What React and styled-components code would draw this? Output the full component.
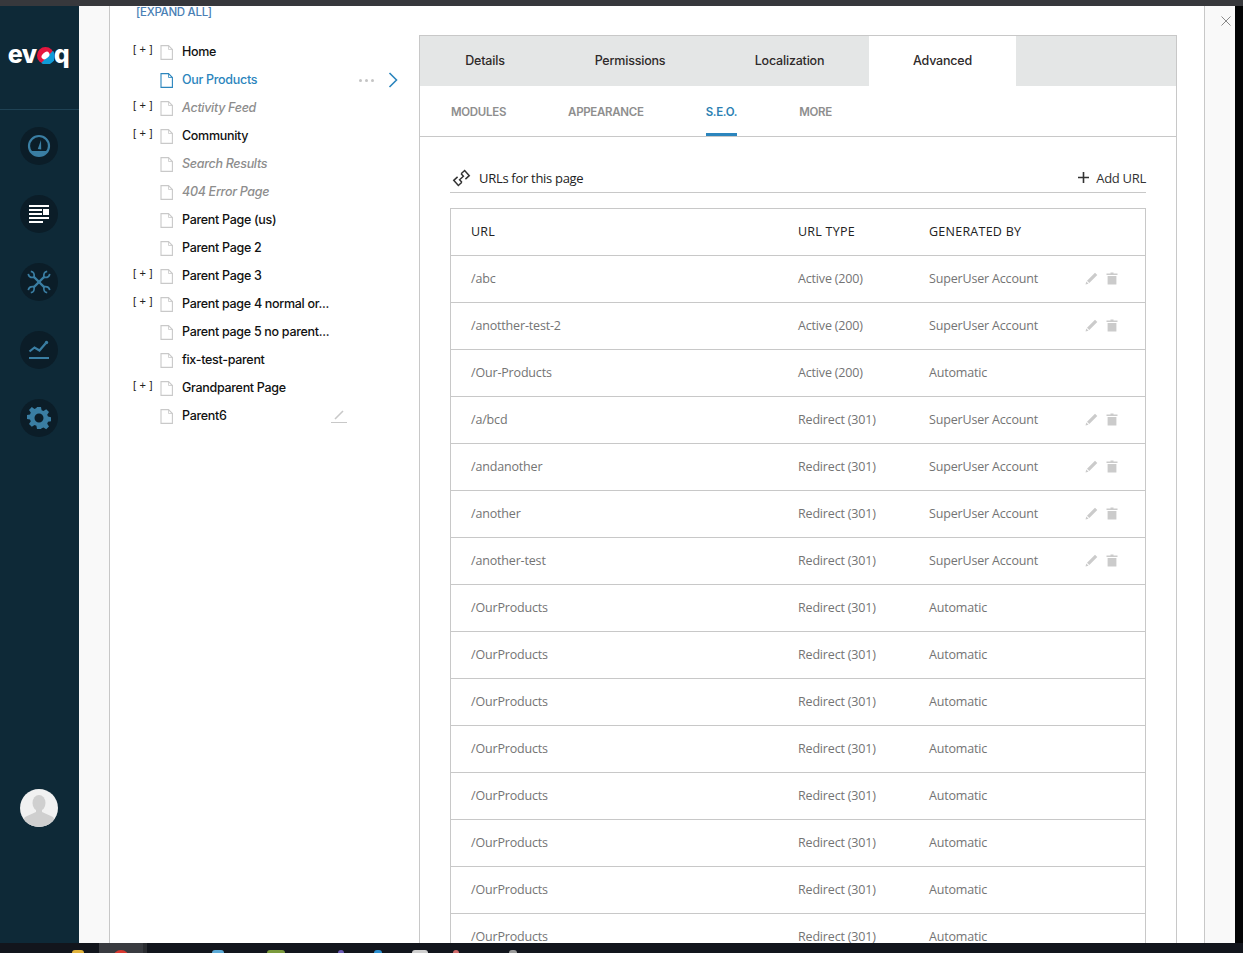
import React from 'react';
import styled, { createGlobalStyle } from 'styled-components';

const GlobalStyle = createGlobalStyle`
    html, body {
        margin : 0;
        padding : 0;
        height : 100%;
        overflow : hidden;
        background : #000;
    }
    body {
        font-family : "Open Sans", "Liberation Sans", sans-serif;
    }
`;

const Page = styled.div`
    width : 1243px;
    height : 953px;
    display : flex;
    flex-direction : column;
    overflow : hidden;
`;
const TopBar = styled.div`
    height : 6px;
    flex : none;
    background : #37383c;
`;
const Middle = styled.div`
    height : 937px;
    flex : none;
    display : flex;
    background : #030405;
`;
const Sidebar = styled.nav`
    width : 79px;
    flex : none;
    box-sizing : border-box;
    padding-right : 1px;
    background : #0e2937;
    display : flex;
    flex-direction : column;
    align-items : center;
`;
const LogoBox = styled.div`
    width : 79px;
    height : 104px;
    flex : none;
    box-sizing : border-box;
    border-bottom : 1px solid #1f4254;
    display : flex;
    align-items : center;
    justify-content : center;
    padding : 0 1px 7px 0;
    color : #fff;
    font : 800 25px/24px "Inter", "Liberation Sans", sans-serif;
    letter-spacing : -0.4px;
`;
const LogoMark = styled.svg`
    width : 17px;
    height : 17px;
    margin : 2px 0 0 0;
`;
const NavList = styled.div`
    display : flex;
    flex-direction : column;
    gap : 30px;
    margin-top : 17px;
`;
const NavButton = styled.button`
    width : 38px;
    height : 38px;
    padding : 0;
    border : 0;
    border-radius : 50%;
    background : #0b1d28;
    color : ${({ $active }) => ($active ? '#fff' : '#3a7ea3')};
    display : flex;
    align-items : center;
    justify-content : center;
`;
const Avatar = styled.div`
    width : 38px;
    height : 38px;
    border-radius : 50%;
    background : #f1f1f1;
    overflow : hidden;
    margin-top : auto;
    margin-bottom : 116px;
`;

const Modal = styled.div`
    flex : 1;
    display : flex;
    background : #f9f9f9;
    padding-left : 30px;
`;
const ModalBody = styled.div`
    width : 1096px;
    flex : none;
    box-sizing : border-box;
    background : #fff;
    border-left : 1px solid #c8c8c8;
    border-right : 1px solid #c8c8c8;
    display : flex;
    overflow : hidden;
`;
const CloseGutter = styled.div`
    flex : 1;
    display : flex;
    justify-content : flex-end;
    padding : 9px 3px 0 0;
    color : #8a8a8a;
`;
const BlackEdge = styled.div`
    width : 8px;
    flex : none;
    background : #030405;
`;

const TreeColumn = styled.div`
    width : 309px;
    flex : none;
    box-sizing : border-box;
`;
const ExpandAll = styled.a`
    display : block;
    box-sizing : border-box;
    height : 31px;
    margin : 0 0 0 26px;
    color : #4a7fb5;
    font : 500 11.5px/13px "Inter", sans-serif;
    letter-spacing : -0.3px;
`;
const TreeList = styled.ul`
    list-style : none;
    margin : 1px 0 0 0;
    padding : 0;
`;
const TreeRow = styled.li`
    height : 28px;
    display : flex;
    align-items : center;
    font : 500 12.5px/16px "Inter", sans-serif;
    letter-spacing : -0.3px;
    color : ${({ $state }) => ($state === 'active' ? '#2b85bd' : $state === 'hidden' ? '#8d8d8d' : '#111')};
    font-style : ${({ $state }) => ($state === 'hidden' ? 'italic' : 'normal')};
`;
const Toggle = styled.span`
    width : 50px;
    flex : none;
    box-sizing : border-box;
    padding : 0 0 6px 23px;
    font : 400 11px/14px "Liberation Sans", sans-serif;
    letter-spacing : 0.2px;
    color : #222;
    white-space : pre;
`;
const PageIcon = styled.svg`
    width : 13px;
    height : 15px;
    flex : none;
    margin-right : 9px;
    color : ${({ $active }) => ($active ? '#2b85bd' : '#c9c9c9')};
`;
const RowLabel = styled.span`
    white-space : nowrap;
`;
const RowTools = styled.span`
    display : flex;
    align-items : center;
    margin-left : ${({ $offset }) => $offset}px;
`;
const Dots = styled.span`
    display : flex;
    gap : 3px;
    margin-right : 14px;
`;
const Dot = styled.i`
    width : 3px;
    height : 3px;
    border-radius : 50%;
    background : #c4c4c4;
`;

const DetailPanel = styled.section`
    width : 758px;
    flex : none;
    box-sizing : border-box;
    margin-top : 29px;
    border : 1px solid #c8c8c8;
    border-bottom : 0;
    overflow : hidden;
`;
const TabBar = styled.div`
    height : 50px;
    display : flex;
    background : #e4e6e6;
`;
const Tab = styled.div`
    box-sizing : border-box;
    width : ${({ $width }) => $width}px;
    display : flex;
    align-items : center;
    justify-content : center;
    padding-bottom : 1px;
    background : ${({ $active }) => ($active ? '#fff' : 'transparent')};
    color : #2e2a2a;
    font : 500 12.5px/16px "Inter", sans-serif;
    letter-spacing : -0.2px;
`;
const SubTabs = styled.div`
    height : 51px;
    box-sizing : border-box;
    border-bottom : 1px solid #c8c8c8;
    display : flex;
    gap : 62px;
    padding-left : 31px;
`;
const SubTab = styled.div`
    height : 50px;
    box-sizing : border-box;
    display : flex;
    align-items : center;
    font : 600 11.5px/14px "Inter", sans-serif;
    letter-spacing : -0.3px;
    color : ${({ $active }) => ($active ? '#2b7fb3' : '#8e8e8e')};
    border-bottom : 3px solid ${({ $active }) => ($active ? '#2b85bd' : 'transparent')};
    padding-top : 5px;
`;
const Content = styled.div`
    padding : 27px 30px 0 30px;
`;
const SectionHead = styled.div`
    height : 29px;
    box-sizing : border-box;
    border-bottom : 1px solid #c8c8c8;
    display : flex;
    align-items : center;
    padding-bottom : 1px;
    font-size : 13px;
    letter-spacing : -0.3px;
    color : #222;
`;
const SectionTitle = styled.span`
    margin-left : 8px;
`;
const AddUrl = styled.button`
    margin-left : auto;
    padding : 0;
    border : 0;
    background : none;
    display : flex;
    align-items : center;
    gap : 7px;
    font : inherit;
    letter-spacing : inherit;
    color : #333;
`;
const UrlTable = styled.div`
    margin-top : 15px;
    border : 1px solid #c8c8c8;
    border-bottom : 0;
`;
const UrlRow = styled.div`
    height : 47px;
    box-sizing : border-box;
    border-bottom : 1px solid #c8c8c8;
    display : grid;
    grid-template-columns : 327px 131px 156px 1fr;
    align-items : center;
    padding : 0 0 2px 20px;
    font-size : 12.5px;
    letter-spacing : ${({ $head }) => ($head ? '0.25px' : '-0.17px')};
    color : ${({ $head }) => ($head ? '#222' : '#747474')};
`;
const RowActions = styled.div`
    display : flex;
    gap : 8px;
    color : #cbcbcb;
`;

const TaskBar = styled.div`
    height : 10px;
    flex : none;
    background : #12151c;
    display : flex;
    align-items : flex-end;
`;
const TaskItem = styled.div`
    width : 44px;
    height : 10px;
    margin-left : 15px;
    background : #393b40;
    border-right : 4px solid #2a2c30;
    display : flex;
    justify-content : center;
    overflow : hidden;
`;
const TaskDot = styled.i`
    width : 16px;
    height : 16px;
    border-radius : 50%;
    background : #d8372f;
    margin-top : 7px;
`;
const TaskIcon = styled.i`
    width : ${({ $width }) => $width}px;
    height : 3px;
    margin-left : ${({ $gap }) => $gap}px;
    border-radius : 3px 3px 0 0;
    background : ${({ $color }) => $color};
`;

const LinkGlyph = styled.svg`
    width : 19px;
    height : 18px;
    margin-left : 2px;
`;

const File = ({ active }) => (
    <PageIcon $active={active} viewBox="0 0 13 15" fill="none" stroke="currentColor" strokeWidth="1.1">
        <path d="M1 .6h7.5L12.400 4.500V14.400H1z" />
        <path d="M8.500.6V4.500h3.900" strokeWidth="0.8" />
    </PageIcon>
);

const Pencil = () => (
    <svg width="13" height="13" viewBox="0 0 13 13" fill="currentColor">
        <path d="M10 .7l2.300 2.300-8 8-2.300-2.300zM1.300 9.500l2.200 2.200-3 .8z" />
    </svg>
);

const Trash = () => (
    <svg width="12" height="13" viewBox="0 0 12 13" fill="currentColor">
        <path d="M4.500.5h3V1.600H11.500V3H.5V1.600h4zM1.600 4h8.800v8.500H1.600z" />
    </svg>
);

const Gauge = () => (
    <svg width="24" height="24" viewBox="0 0 24 24">
        <circle cx="12" cy="12" r="10" fill="none" stroke="currentColor" strokeWidth="2.200" />
        <path d="M3.500 17h17a10 10 0 0 1-17 0z" fill="currentColor" />
        <path d="M10.800 15l3.200-9 .2 9.400z" fill="currentColor" />
    </svg>
);

const Article = () => (
    <svg width="22" height="21" viewBox="0 0 22 21" fill="currentColor">
        <path d="M1 1h20v2H1zM1 5h13v2H1zM15 5h6v6h-6zM1 9h13v2H1zM1 13h20v2H1zM1 17h14v2H1z" />
    </svg>
);

const Wrench = () => (
    <>
        <path d="M6.500 6.500l11 11" strokeWidth="2.400" />
        <path d="M1.300 3.800Q1.800 8 7 7.400Q8 2 3.800 1.300" />
        <path d="M22.700 20.200Q22.200 16 17 16.600Q16 22 20.200 22.700" />
    </>
);

const Tools = () => (
    <svg width="24" height="24" viewBox="0 0 24 24" fill="none" stroke="currentColor" strokeWidth="1.700">
        <Wrench />
        <g transform="translate(24 0) scale(-1 1)"><Wrench /></g>
    </svg>
);

const Chart = () => (
    <svg width="22" height="20" viewBox="0 0 22 20" fill="currentColor">
        <path d="M1 17h20v2H1z" />
        <path d="M1.500 11.500l5-4 5 3 6-7" fill="none" stroke="currentColor" strokeWidth="2.200" />
        <circle cx="18.500" cy="2.500" r="1.700" />
    </svg>
);

const Gear = () => (
    <svg width="24" height="24" viewBox="0 0 24 24" fill="currentColor">
        <path fillRule="evenodd" d="M10 1h4l.6 3.200 1.900.8 2.700-1.800 2.800 2.800-1.800 2.700.8 1.900 3 .6v4l-3 .6-.8 1.900 1.800 2.700-2.800 2.800-2.700-1.800-1.900.8L14 23h-4l-.6-3.200-1.900-.8-2.700 1.800L2 18l1.800-2.700-.8-1.900-3-.4v-4l3-.6.8-1.900L2 3.900l2.800-2.800 2.700 1.800 1.900-.8zM12 7.500a4.500 4.500 0 1 0 0 9 4.500 4.500 0 0 0 0-9z" />
    </svg>
);

const LinkIcon = () => (
    <LinkGlyph viewBox="0 0 22 20" fill="none" stroke="#333" strokeWidth="1.700">
        <g transform="rotate(-42 11 10)">
            <path d="M8.500 6H2.500v8h5.500M13.500 14h6V6h-5.500" />
            <path d="M8 14v-4h6V6" />
        </g>
    </LinkGlyph>
);

const Person = () => (
    <svg width="38" height="38" viewBox="0 0 38 38" fill="#cfcfcf">
        <ellipse cx="19" cy="14" rx="6.500" ry="8" />
        <path d="M16 20h6v3l10 4.500c1 .4 2 1.500 2 2.500l-1 8H5l-1-8c0-1 1-2.100 2-2.500L16 23z" />
    </svg>
);

const treeRows = [
    { name: 'Home', toggle: true },
    { name: 'Our Products', state: 'active', tools: true },
    { name: 'Activity Feed', toggle: true, state: 'hidden' },
    { name: 'Community', toggle: true },
    { name: 'Search Results', state: 'hidden' },
    { name: '404 Error Page', state: 'hidden' },
    { name: 'Parent Page (us)' },
    { name: 'Parent Page 2' },
    { name: 'Parent Page 3', toggle: true },
    { name: 'Parent page 4 normal or...', toggle: true },
    { name: 'Parent page 5 no parent...' },
    { name: 'fix-test-parent' },
    { name: 'Grandparent Page', toggle: true },
    { name: 'Parent6', edit: true },
];

const tabs = [
    { name: 'Details', width: 130 },
    { name: 'Permissions', width: 160 },
    { name: 'Localization', width: 159 },
    { name: 'Advanced', width: 147, active: true },
];

const subTabs = ['MODULES', 'APPEARANCE', 'S.E.O.', 'MORE'];

const taskIcons = [
    { gap: 65, width: 12, color: '#5aa9d6' },
    { gap: 43, width: 18, color: '#7a9a3c' },
    { gap: 53, width: 6, color: '#6b5bb5' },
    { gap: 30, width: 8, color: '#2b8fd0' },
    { gap: 30, width: 16, color: '#cfcfcf' },
    { gap: 25, width: 6, color: '#d06a6a' },
    { gap: 50, width: 8, color: '#9a9a9a' },
];

const SU = 'SuperUser Account';
const urls = [
    ['/abc', 'Active (200)', SU],
    ['/anotther-test-2', 'Active (200)', SU],
    ['/Our-Products', 'Active (200)', 'Automatic'],
    ['/a/bcd', 'Redirect (301)', SU],
    ['/andanother', 'Redirect (301)', SU],
    ['/another', 'Redirect (301)', SU],
    ['/another-test', 'Redirect (301)', SU],
    ...Array.from({ length: 8 }, () => ['/OurProducts', 'Redirect (301)', 'Automatic']),
];

const App = () => (
    <Page>
        <GlobalStyle />
        <TopBar />
        <Middle>
            <Sidebar>
                <LogoBox>
                    ev
                    <LogoMark viewBox="0 0 16 16">
                        <circle cx="8" cy="8" r="8" fill="#e5173f" />
                        <path d="M15 3.500A8 8 0 0 1 4 15z" fill="#0f9bd7" />
                        <ellipse cx="8" cy="8" rx="4.200" ry="2.800" fill="#fff" transform="rotate(-40 8 8)" />
                    </LogoMark>
                    q
                </LogoBox>
                <NavList>
                    <NavButton><Gauge /></NavButton>
                    <NavButton $active><Article /></NavButton>
                    <NavButton><Tools /></NavButton>
                    <NavButton><Chart /></NavButton>
                    <NavButton><Gear /></NavButton>
                </NavList>
                <Avatar><Person /></Avatar>
            </Sidebar>
            <Modal>
                <ModalBody>
                    <TreeColumn>
                        <ExpandAll>[EXPAND ALL]</ExpandAll>
                        <TreeList>
                            {treeRows.map((row) => (
                                <TreeRow key={row.name} $state={row.state}>
                                    <Toggle>{row.toggle ? '[ + ]' : ''}</Toggle>
                                    <File active={row.state === 'active'} />
                                    <RowLabel>{row.name}</RowLabel>
                                    {row.tools && (
                                        <RowTools $offset={102}>
                                            <Dots><Dot /><Dot /><Dot /></Dots>
                                            <svg width="10" height="16" viewBox="0 0 10 16" fill="none" stroke="#2b85bd" strokeWidth="1.600">
                                                <path d="M1.500 1l7 7-7 7" />
                                            </svg>
                                        </RowTools>
                                    )}
                                    {row.edit && (
                                        <RowTools $offset={104}>
                                            <svg width="16" height="14" viewBox="0 0 16 14" fill="none" stroke="#c8c8c8">
                                                <path d="M4 10l8-8" strokeWidth="1.600" />
                                                <path d="M0 13.500h16" />
                                            </svg>
                                        </RowTools>
                                    )}
                                </TreeRow>
                            ))}
                        </TreeList>
                    </TreeColumn>
                    <DetailPanel>
                        <TabBar>
                            {tabs.map((tab) => (
                                <Tab key={tab.name} $width={tab.width} $active={tab.active}>{tab.name}</Tab>
                            ))}
                        </TabBar>
                        <SubTabs>
                            {subTabs.map((name) => (
                                <SubTab key={name} $active={name === 'S.E.O.'}>{name}</SubTab>
                            ))}
                        </SubTabs>
                        <Content>
                            <SectionHead>
                                <LinkIcon />
                                <SectionTitle>URLs for this page</SectionTitle>
                                <AddUrl>
                                    <svg width="11" height="11" viewBox="0 0 11 11" fill="#333">
                                        <path d="M4.700 0h1.600v4.700H11v1.600H6.300V11H4.700V6.300H0V4.700h4.700z" />
                                    </svg>
                                    Add URL
                                </AddUrl>
                            </SectionHead>
                            <UrlTable>
                                <UrlRow $head>
                                    <span>URL</span>
                                    <span>URL TYPE</span>
                                    <span>GENERATED BY</span>
                                </UrlRow>
                                {urls.map(([url, type, by], i) => (
                                    <UrlRow key={i}>
                                        <span>{url}</span>
                                        <span>{type}</span>
                                        <span>{by}</span>
                                        {by === SU && (
                                            <RowActions>
                                                <Pencil />
                                                <Trash />
                                            </RowActions>
                                        )}
                                    </UrlRow>
                                ))}
                            </UrlTable>
                        </Content>
                    </DetailPanel>
                </ModalBody>
                <CloseGutter>
                    <svg width="12" height="12" viewBox="0 0 12 12" stroke="currentColor" strokeWidth="1">
                        <path d="M1.500 1.500l9 9M10.500 1.500l-9 9" />
                    </svg>
                </CloseGutter>
            </Modal>
            <BlackEdge />
        </Middle>
        <TaskBar>
            <TaskIcon $gap={72} $width={12} $color="#e0b23a" />
            <TaskItem><TaskDot /></TaskItem>
            {taskIcons.map((icon) => (
                <TaskIcon key={icon.color} $gap={icon.gap} $width={icon.width} $color={icon.color} />
            ))}
        </TaskBar>
    </Page>
);

export default App;
